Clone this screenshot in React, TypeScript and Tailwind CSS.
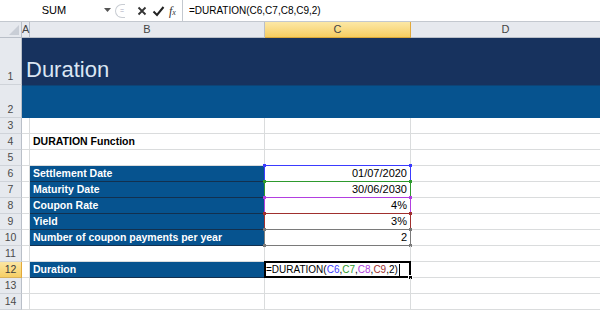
import React from 'react';

const font = { fontFamily: '"Liberation Sans", Arial, sans-serif' };

function RowHead({ n, active }: { n: number; active?: boolean }) {
  return (
    <div
      className={
        active
          ? 'w-[22px] shrink-0 flex items-end justify-center text-[10.5px] leading-[15px] text-[#3b3b3b] bg-gradient-to-b from-[#fbe6a2] to-[#f6cf64] border-r border-r-[#e2a93a] border-b border-b-[#d9b25a]'
          : 'w-[22px] shrink-0 flex items-end justify-center text-[10.5px] leading-[15px] text-[#4a4a4a] bg-[#e6e9ee] border-r border-r-[#b9bfc8] border-b border-b-[#cfd3d9]'
      }
    >
      {n}
    </div>
  );
}

function Corners({ color }: { color: string }) {
  return (
    <>
      <span className="absolute -top-[2px] -left-[2px] w-[3px] h-[3px]" style={{ background: color }} />
      <span className="absolute -top-[2px] -right-[2px] w-[3px] h-[3px]" style={{ background: color }} />
      <span className="absolute -bottom-[2px] -left-[2px] w-[3px] h-[3px]" style={{ background: color }} />
      <span className="absolute -bottom-[2px] -right-[2px] w-[3px] h-[3px]" style={{ background: color }} />
    </>
  );
}

function Row({
  n,
  b,
  c,
  label,
  range,
  active,
}: {
  n: number;
  b?: React.ReactNode;
  c?: React.ReactNode;
  label?: boolean;
  range?: string;
  active?: boolean;
}) {
  return (
    <div className="flex h-4">
      <RowHead n={n} active={active} />
      <div className="w-[8px] shrink-0 border-r border-b border-[#dadcdd]" />
      {label ? (
        <div className="w-[235px] shrink-0 bg-[#06538f] border-r border-b border-[#12304f] text-white font-bold text-[10.5px] leading-[15px] pl-[3px] whitespace-nowrap">
          {b}
        </div>
      ) : (
        <div className="w-[235px] shrink-0 border-r border-b border-[#dadcdd] text-black font-bold text-[10.5px] leading-[15px] pl-[3px] whitespace-nowrap">
          {b}
        </div>
      )}
      <div className="relative w-[146px] shrink-0 border-r border-b border-[#dadcdd] text-[11px] leading-[15px] text-black text-right pr-[3px]">
        {c}
        {range && (
          <>
            <span className="absolute -inset-px border" style={{ borderColor: range }} />
            <Corners color={range} />
          </>
        )}
        {active && (
          <>
            <span className="absolute -inset-px border-2 border-black" />
            <span className="absolute -right-[3px] -bottom-[3px] w-[5px] h-[5px] bg-black border border-white" />
          </>
        )}
      </div>
      <div className="flex-1 border-b border-[#dadcdd]" />
    </div>
  );
}

function Formula() {
  return (
    <>
      =DURATION(
      <span className="text-[#3b3bff]">C6</span>,<span className="text-[#2e9a2e]">C7</span>,
      <span className="text-[#b23fe0]">C8</span>,<span className="text-[#a0302e]">C9</span>,2)
    </>
  );
}

export default function App() {
  return (
    <div className="w-[600px] h-[310px] overflow-hidden bg-white" style={font}>
      {/* formula bar */}
      <div className="flex h-[22px] bg-white border-b border-[#c3c8cf] items-center">
        <div className="w-[113px] flex items-center text-[11px] text-black">
          <span className="flex-1 text-center pl-[4px]">SUM</span>
          <svg width="7" height="5" viewBox="0 0 7 5" className="mr-[2px]">
            <path d="M0 0 H7 L3.5 4 Z" fill="#555" />
          </svg>
        </div>
        <div className="w-[10px] h-[14px] rounded-l-full border border-r-0 border-[#c9cdd3] ml-[2px] flex items-center justify-center">
          <span className="text-[7px] text-[#aab] leading-none pl-[3px]">=</span>
        </div>
        <svg width="12" height="12" viewBox="0 0 12 12" className="ml-[11px]">
          <path d="M2.5 2.5 L9.5 9.5 M9.5 2.5 L2.5 9.5" stroke="#333" strokeWidth="1.8" />
        </svg>
        <svg width="13" height="12" viewBox="0 0 13 12" className="ml-[4px]">
          <path d="M1.5 6.5 L5 10 L11.5 2" stroke="#222" strokeWidth="2" fill="none" />
        </svg>
        <span className="ml-[4px] italic text-[12px] text-[#333]" style={{ fontFamily: '"Liberation Serif", serif' }}>
          f<span className="text-[8px]">x</span>
        </span>
        <div className="ml-[6px] h-[21px] border-l border-[#c3c8cf] flex-1 flex items-center pl-[6px] text-[10px] text-black whitespace-nowrap">
          =DURATION(C6,C7,C8,C9,2)
        </div>
      </div>

      {/* column headers */}
      <div className="flex h-[16px] text-[11px] leading-[15px] text-[#444]">
        <div className="relative w-[22px] bg-[#e6e9ee] border-r border-b border-[#b9bfc8]">
          <svg width="10" height="10" viewBox="0 0 10 10" className="absolute right-[2px] bottom-[2px]">
            <path d="M10 0 V10 H0 Z" fill="#c9ced6" />
          </svg>
        </div>
        <div className="w-[8px] bg-[#e6e9ee] border-r border-b border-[#b9bfc8] text-center">A</div>
        <div className="w-[235px] bg-[#e6e9ee] border-r border-b border-[#b9bfc8] text-center">B</div>
        <div className="w-[146px] bg-gradient-to-b from-[#fce8a6] to-[#f6cd5f] border-r border-r-[#e2a93a] border-b border-b-[#d9a73a] text-center">
          C
        </div>
        <div className="flex-1 bg-[#e6e9ee] border-b border-[#b9bfc8] text-center">D</div>
      </div>

      {/* row 1 */}
      <div className="flex h-[47px]">
        <RowHead n={1} />
        <div className="flex-1 bg-[#17325e] flex items-end pl-[4px] pb-[2px]">
          <span className="text-[22px] leading-[26px] text-[#dbe6f3]">Duration</span>
        </div>
      </div>
      {/* row 2 */}
      <div className="flex h-[33px]">
        <RowHead n={2} />
        <div className="flex-1 bg-[#06538f] border-t border-[#0d4476]" />
      </div>

      <Row n={3} />
      <Row n={4} b="DURATION Function" />
      <Row n={5} />
      <Row n={6} label b="Settlement Date" c="01/07/2020" range="#3b3bff" />
      <Row n={7} label b="Maturity Date" c="30/06/2030" range="#2e9a2e" />
      <Row n={8} label b="Coupon Rate" c="4%" range="#b23fe0" />
      <Row n={9} label b="Yield" c="3%" range="#a0302e" />
      <Row n={10} label b="Number of coupon payments per year" c="2" range="#7a7a7a" />
      <Row n={11} />
      <Row
        n={12}
        label
        active
        b="Duration"
        c={
          <span className="flex items-center text-[10px] text-left pl-[1px] whitespace-nowrap">
            <Formula />
            <span className="inline-block w-px h-[12px] bg-black ml-px" />
          </span>
        }
      />
      <Row n={13} />
      <Row n={14} />
    </div>
  );
}
